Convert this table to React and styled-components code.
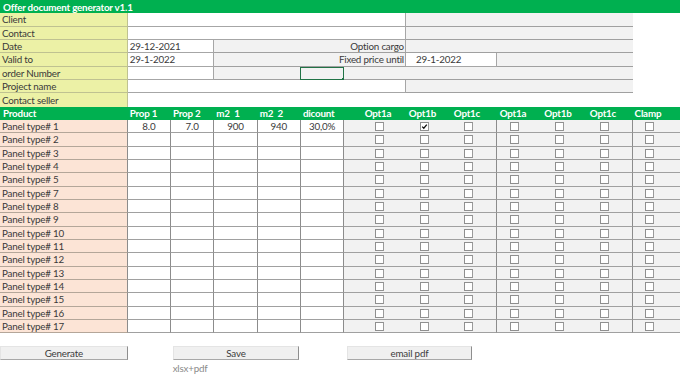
import React from "react";
import styled, { createGlobalStyle } from "styled-components";

const GREEN = "#00b050";
const LINE = "#a6a6a6";

const GlobalStyle = createGlobalStyle`
  body {
    margin: 0;
    background: #fff;
    font-family: Lato, "Liberation Sans", sans-serif;
  }
`;

const Sheet = styled.div`
  width: 680px;
  height: 383px;
  overflow: hidden;
  display: flex;
  flex-direction: column;
  font-size: 9.8px;
  letter-spacing: -0.2px;
  color: #3a3a3a;
`;

const Row = styled.div`
  display: flex;
  flex: none;
  height: calc(40px / 3);
`;

const TitleBar = styled(Row)`
  background: ${GREEN};
  color: #fff;
  font-weight: 700;
  align-items: center;
  padding-left: 3px;
`;

const HeaderRow = styled(Row)`
  background: ${GREEN};
  color: #fff;
  font-weight: 700;
`;

const Cell = styled.div`
  flex: none;
  box-sizing: border-box;
  width: ${(p) => p.$w}px;
  height: 100%;
  display: flex;
  align-items: center;
  justify-content: ${(p) =>
    p.$align === "right" ? "flex-end" : p.$align === "center" ? "center" : "flex-start"};
  padding: 0 ${(p) => p.$pad ?? 2}px;
  white-space: nowrap;
  overflow: hidden;
  border-right: ${(p) => (p.$noRight ? "none" : `1px solid ${LINE}`)};
  border-bottom: ${(p) => (p.$noBottom ? "none" : `1px solid ${LINE}`)};
`;

const Label = styled(Cell)`
  background: #ecf1a6;
  border-color: #bfc291;
`;

const Field = styled(Cell)`
  background: #fff;
`;

const Shade = styled(Cell)`
  background: #f2f2f2;
  border-bottom-color: #a0a0a0;
`;

const Blank = styled(Cell)`
  background: #fff;
  border: none;
`;

const Selected = styled(Shade)`
  position: relative;
  border: 1.5px solid #217346;
  &::after {
    content: "";
    position: absolute;
    right: -2px;
    bottom: -2px;
    width: 3px;
    height: 3px;
    background: #217346;
  }
`;

const HeadCell = styled(Cell)`
  border: none;
`;

const PanelCell = styled(Cell)`
  background: #fce4d6;
  border-right-color: #8c8c8c;
  border-bottom-color: #b4a699;
`;

const DataCell = styled(Cell)`
  background: #fff;
  border-right-color: #8c8c8c;
  border-bottom-color: #a0a0a0;
`;

const CheckGroup = styled.div`
  flex: none;
  box-sizing: border-box;
  width: ${(p) => p.$w}px;
  height: 100%;
  display: flex;
  align-items: center;
  gap: ${(p) => p.$gap}px;
  padding-left: ${(p) => p.$pl}px;
  background: ${(p) => (p.$head ? "transparent" : "#f2f2f2")};
  border-right: ${(p) => (p.$line && !p.$head ? "1px solid #8c8c8c" : "none")};
  border-bottom: ${(p) => (p.$head ? "none" : "1px solid #a0a0a0")};
`;

const Slot = styled.div`
  flex: none;
  width: ${(p) => p.$w}px;
  display: flex;
  justify-content: center;
  padding-right: ${(p) => (p.$head ? 4 : 0)}px;
  box-sizing: border-box;
`;

const Box = styled.div`
  width: 9px;
  height: 9px;
  box-sizing: border-box;
  margin-top: 1px;
  background: #fff;
  border: 1px solid #8f8f8f;
  border-right-color: #9a9a9a;
  display: flex;
  align-items: center;
  justify-content: center;
`;

const Bottom = styled.div`
  flex: 1;
  display: flex;
  align-items: flex-start;
  padding-top: 12.7px;
`;

const ButtonCol = styled.div`
  display: flex;
  flex-direction: column;
  margin-left: ${(p) => p.$ml || 0}px;
`;

const Button = styled.div`
  box-sizing: border-box;
  width: ${(p) => p.$w}px;
  height: 14px;
  display: flex;
  align-items: center;
  justify-content: center;
  background: #f0f0f0;
  border: 1px solid;
  border-color: #e4e4e4 #8e8e8e #a8a8a8 #e4e4e4;
  color: #3c3c3c;
`;

const Caption = styled.div`
  margin-top: 2px;
  color: #8a8a8a;
`;

const A = 127.67;
const C = 43.33;

const groups = [
  { w: 152.67, pl: 17.67, gap: 8.5, slot: 36, line: true, labels: ["Opt1a", "Opt1b", "Opt1c"] },
  { w: 136.33, pl: 0, gap: 9, slot: 36, line: true, labels: ["Opt1a", "Opt1b", "Opt1c"] },
  { w: 46.67, pl: 0, gap: 0, slot: 33.33, line: false, labels: ["Clamp"] },
];

const panels = [1, 2, 3, 4, 5, 7, 8, 9, 10, 11, 12, 13, 14, 15, 16, 17];

function Check({ on }) {
  return (
    <Box>
      {on && (
        <svg width="7" height="7" viewBox="0 0 7 7">
          <path d="M1.2 3.6 L2.8 5.2 L5.8 1.6" fill="none" stroke="#111" strokeWidth="1.3" />
        </svg>
      )}
    </Box>
  );
}

function CheckCells({ head, checked = [] }) {
  let n = 0;
  return groups.map((g, gi) => (
    <CheckGroup key={gi} $w={g.w} $pl={g.pl} $gap={g.gap} $line={g.line} $head={head}>
      {g.labels.map((l) => {
        const i = n++;
        return (
          <Slot key={i} $w={g.slot} $head={head}>
            {head ? l : <Check on={checked.includes(i)} />}
          </Slot>
        );
      })}
    </CheckGroup>
  ));
}

export default function App() {
  return (
    <>
      <GlobalStyle />
      <Sheet>
        <TitleBar>Offer document generator v1.1</TitleBar>

        {["Client", "Contact"].map((l) => (
          <Row key={l}>
            <Label $w={A}>{l}</Label>
            <Field $w={278.33} />
            <Shade $w={227.33} $noRight />
            <Blank $w={46.67} />
          </Row>
        ))}

        <Row>
          <Label $w={A}>Date</Label>
          <Field $w={86.67}>29-12-2021</Field>
          <Shade $w={191.67} $align="right" $pad={1}>Option cargo</Shade>
          <Shade $w={227.33} $noRight />
          <Blank $w={46.67} />
        </Row>

        <Row>
          <Label $w={A}>Valid to</Label>
          <Field $w={86.67}>29-1-2022</Field>
          <Shade $w={191.67} $align="right" $pad={1}>Fixed price until</Shade>
          <Field $w={91} $pad={10}>29-1-2022</Field>
          <Shade $w={136.33} $noRight />
          <Blank $w={46.67} />
        </Row>

        <Row>
          <Label $w={A}>order Number</Label>
          <Field $w={86.67} />
          <Shade $w={86} $noRight />
          <Selected $w={44} />
          <Shade $w={289} $noRight />
          <Blank $w={46.67} />
        </Row>

        <Row>
          <Label $w={A}>Project name</Label>
          <Field $w={278.33} />
          <Shade $w={227.33} $noRight />
          <Blank $w={46.67} />
        </Row>

        <Row>
          <Label $w={A} $noBottom>Contact seller</Label>
          <Field $w={552.33} $noRight $noBottom />
        </Row>

        <HeaderRow>
          <HeadCell $w={A} $pad={3}>Product</HeadCell>
          {["Prop 1", "Prop 2", "m2\u00a0\u00a01", "m2\u00a0\u00a02", "dicount"].map((h) => (
            <HeadCell key={h} $w={C}>{h}</HeadCell>
          ))}
          <CheckCells head />
        </HeaderRow>

        {panels.map((n, r) => {
          const vals = r === 0 ? ["8.0", "7.0", "900", "940", "30,0%"] : ["", "", "", "", ""];
          return (
            <Row key={n}>
              <PanelCell $w={A}>Panel type# {n}</PanelCell>
              {vals.map((v, i) => (
                <DataCell key={i} $w={C} $align="center">{v}</DataCell>
              ))}
              <CheckCells checked={r === 0 ? [1] : []} />
            </Row>
          );
        })}

        <Bottom>
          <Button $w={127.67}>Generate</Button>
          <ButtonCol $ml={45}>
            <Button $w={126.67}>Save</Button>
            <Caption>xlsx+pdf</Caption>
          </ButtonCol>
          <ButtonCol $ml={48}>
            <Button $w={124.33}>email pdf</Button>
          </ButtonCol>
        </Bottom>
      </Sheet>
    </>
  );
}
